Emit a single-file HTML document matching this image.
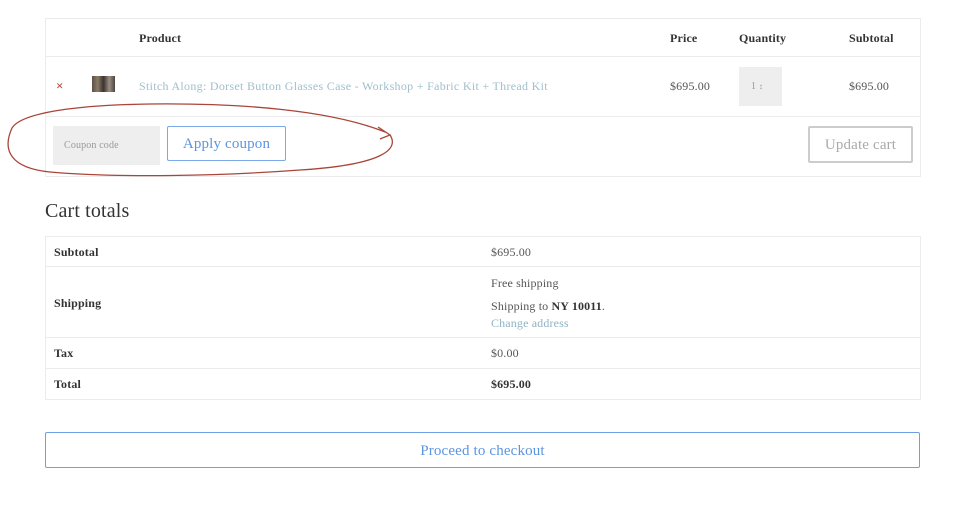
<!DOCTYPE html><html><head><style>
body{margin:0;width:980px;height:528px;background:#fff;font-family:"Liberation Serif",serif;color:#444;position:relative;overflow:hidden;letter-spacing:0.15px}
.a{position:absolute}
.b{border:1px solid #ececec}
.h{font-weight:bold;font-size:12px;color:#333}
.t{font-size:12px;color:#555}
</style></head><body>
<div class="a b" style="left:45px;top:18px;width:874px;height:157px"></div>
<div class="a" style="left:46px;top:56px;width:874px;height:1px;background:#ececec"></div>
<div class="a" style="left:46px;top:116px;width:874px;height:1px;background:#ececec"></div>
<div class="a h" style="left:139px;top:31px">Product</div>
<div class="a h" style="left:670px;top:31px">Price</div>
<div class="a h" style="left:739px;top:31px">Quantity</div>
<div class="a h" style="left:849px;top:31px">Subtotal</div>
<div class="a" style="left:56px;top:78px;color:#b0473b;font-size:13px;font-weight:bold">×</div>
<div class="a" style="left:92px;top:76px;width:23px;height:16px;background:linear-gradient(90deg,#5a5048,#8a7a66,#3a3430,#9a8f80,#4c4440)"></div>
<div class="a" style="left:139px;top:79px;font-size:12px;color:#9fbfcc;letter-spacing:0.3px">Stitch Along: Dorset Button Glasses Case - Workshop + Fabric Kit + Thread Kit</div>
<div class="a t" style="left:670px;top:79px">$695.00</div>
<div class="a" style="left:739px;top:67px;width:43px;height:39px;background:#eee;font-size:10px;color:#999;line-height:39px;text-indent:12px">1 <span style="font-size:8px">↕</span></div>
<div class="a t" style="left:849px;top:79px">$695.00</div>
<div class="a" style="left:53px;top:126px;width:107px;height:39px;background:#eee;font-size:10px;color:#999;line-height:39px;text-indent:11px">Coupon code</div>
<div class="a" style="left:167px;top:126px;width:117px;height:33px;border:1px solid #7aa8e8;border-radius:2px;color:#5b95e0;font-size:15px;line-height:35px;text-align:center">Apply coupon</div>
<div class="a" style="left:808px;top:126px;width:101px;height:33px;border:2px solid #ccc;border-radius:2px;color:#aaa;font-size:15px;line-height:35px;text-align:center">Update cart</div>
<svg class="a" style="left:0;top:0" width="420" height="200"><path d="M390 135 C400 150 380 165 300 170 C220 176 120 178 50 172 C10 168 2 150 12 128 C22 112 80 105 150 104 C240 103 330 110 385 132 M378 127 L390 135 L380 139" fill="none" stroke="#a9453a" stroke-width="1.3"/></svg>
<div class="a" style="left:45px;top:200px;font-size:20px;color:#333">Cart totals</div>
<div class="a b" style="left:45px;top:236px;width:874px;height:162px"></div>
<div class="a" style="left:46px;top:266px;width:874px;height:1px;background:#ececec"></div>
<div class="a" style="left:46px;top:337px;width:874px;height:1px;background:#ececec"></div>
<div class="a" style="left:46px;top:368px;width:874px;height:1px;background:#ececec"></div>
<div class="a h" style="left:54px;top:245px">Subtotal</div>
<div class="a t" style="left:491px;top:245px">$695.00</div>
<div class="a h" style="left:54px;top:296px">Shipping</div>
<div class="a t" style="left:491px;top:276px">Free shipping</div>
<div class="a t" style="left:491px;top:299px">Shipping to <b style="color:#333">NY 10011</b>.</div>
<div class="a" style="left:491px;top:316px;font-size:12px;color:#8fb4c4">Change address</div>
<div class="a h" style="left:54px;top:346px">Tax</div>
<div class="a t" style="left:491px;top:346px">$0.00</div>
<div class="a h" style="left:54px;top:377px">Total</div>
<div class="a h" style="left:491px;top:377px">$695.00</div>
<div class="a" style="left:45px;top:432px;width:873px;height:34px;border:1px solid #6fa0e6;border-radius:2px;color:#5b95e0;font-size:15px;line-height:36px;text-align:center">Proceed to checkout</div>
</body></html>
